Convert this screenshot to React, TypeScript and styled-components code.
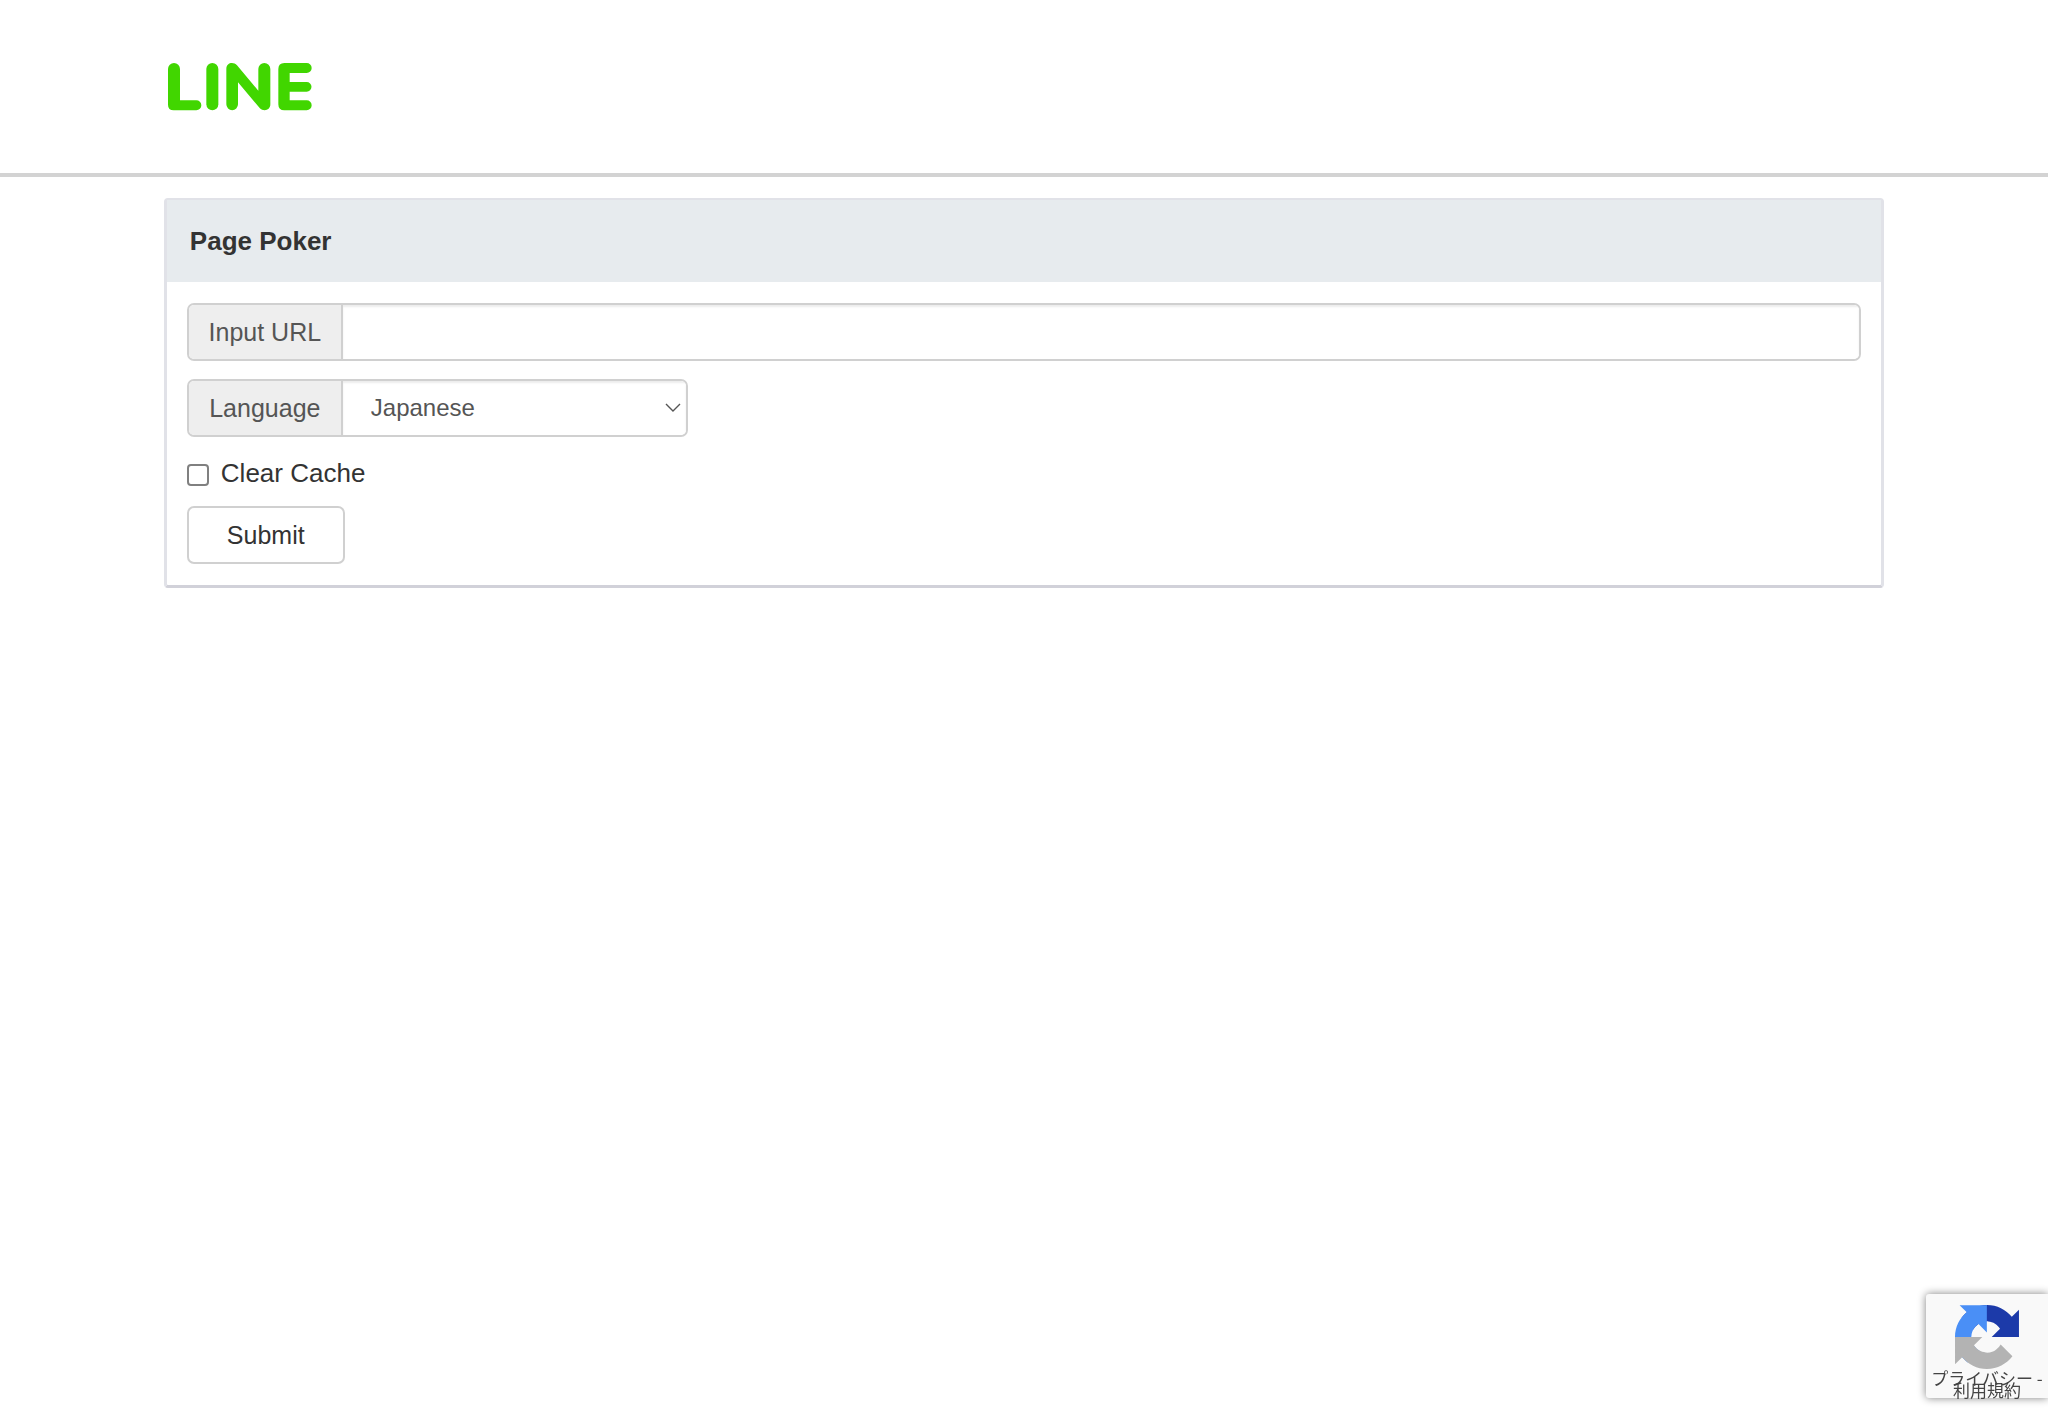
import React from "react";
import styled, { createGlobalStyle } from "styled-components";

const GlobalStyle = createGlobalStyle`
  *, *::before, *::after { box-sizing: border-box; }
  body {
    margin: 0;
    background: #fff;
    color: #333;
    font-family: "Liberation Sans", Arial, "Noto Sans CJK JP", sans-serif;
    font-size: 25px;
    line-height: 36px;
  }
`;

const Header = styled.header`
  padding: 63px 8% 62px;
  border-bottom: 4px solid #d3d3d3;
`;

const LogoLink = styled.a`
  display: block;
  width: fit-content;
  padding-left: 4px;
  svg { display: block; }
`;

const Main = styled.main`
  padding: 21px 8%;
`;

const Panel = styled.section`
  border: 3px solid #e1e2e8;
  border-top-width: 2px;
  border-bottom-color: #d1d1d9;
  border-radius: 4px;
`;

const PanelHeader = styled.header`
  padding: 23px;
  background: #e7ebee;
`;

const PanelTitle = styled.h1`
  margin: 0;
  font-size: 26px;
  line-height: 36px;
`;

const Form = styled.form`
  display: flex;
  flex-direction: column;
  align-items: flex-start;
  padding: 21px 20px;
`;

const InputGroup = styled.div<{ $wide?: boolean }>`
  display: flex;
  width: ${(p) => (p.$wide ? "100%" : "501px")};
  max-width: 100%;
  height: 58px;
  margin-bottom: 18px;
  border: 2px solid #d0d0d0;
  border-radius: 7px;
  overflow: hidden;
`;

const Addon = styled.label`
  flex: 0 0 154px;
  border-right: 2px solid #d0d0d0;
  background: #eee;
  color: #555;
  line-height: 54px;
  text-align: center;
`;

const UrlInput = styled.input`
  flex: 1;
  min-width: 0;
  padding: 0 21px;
  border: 0;
  outline: 0;
  background: #fff;
  box-shadow: inset 0 2px 2px rgba(0, 0, 0, 0.075);
  color: #555;
  font: inherit;
`;

const SelectWrap = styled.div`
  position: relative;
  flex: 1;
  display: flex;
  svg {
    position: absolute;
    right: 5px;
    top: 22px;
    pointer-events: none;
  }
`;

const Select = styled.select`
  flex: 1;
  appearance: none;
  padding: 0 28px;
  border: 0;
  outline: 0;
  background: #fff;
  box-shadow: inset 0 2px 2px rgba(0, 0, 0, 0.075);
  color: #555;
  font: inherit;
  font-size: 24px;
`;

const CheckLabel = styled.label`
  display: flex;
  align-items: center;
  gap: 12px;
  margin-bottom: 15px;
  font-size: 26px;
`;

const Checkbox = styled.input`
  appearance: none;
  width: 22px;
  height: 22px;
  margin: 4px 0 0;
  border: 2px solid #808080;
  border-radius: 4px;
  background: #fff;
  &:checked { background: #0075ff; border-color: #0075ff; }
`;

const SubmitButton = styled.button`
  height: 58px;
  padding: 0 38px;
  border: 2px solid #d0d0d0;
  border-radius: 7px;
  background: #fff;
  color: #333;
  font: inherit;
`;

const Badge = styled.aside`
  position: fixed;
  right: 0;
  bottom: 25px;
  width: 122px;
  height: 104px;
  padding-top: 11px;
  border-radius: 3px 0 0 3px;
  background: #f9f9f9;
  box-shadow: 0 0 9px gray;
  display: flex;
  flex-direction: column;
  align-items: center;
  svg { flex: none; }
`;

const BadgeText = styled.div`
  margin-top: 3px;
  color: #444;
  font-family: "Noto Sans CJK JP", sans-serif;
  font-size: 17px;
  line-height: 12px;
  text-align: center;
  white-space: nowrap;
`;

const BadgeLink = styled.a`
  color: inherit;
  text-decoration: none;
`;

function LineLogo() {
  return (
    <svg width="144" height="48" viewBox="53 69 432 144" fill="#41d600" aria-hidden="true">
      <path d="M53 87a18 18 0 0 1 36 0V181H138a15 15 0 0 1 0 30H70Q53 211 53 194Z" />
      <rect x="168" y="69" width="36" height="142" rx="18" />
      <path d="M228 87C228 68 249 64 260 76L324 152V87a18 18 0 0 1 36 0V193C360 212 339 216 328 204L263 127V193a17.500 17.500 0 0 1-35 0Z" />
      <path d="M384 87Q384 69 402 69H469a15 15 0 0 1 0 30H418V126H469a14.500 14.500 0 0 1 0 29H418V181H469a15 15 0 0 1 0 30H402Q384 211 384 193Z" />
    </svg>
  );
}

function RecaptchaLogo() {
  return (
    <svg width="64" height="64" viewBox="0 0 64 64" aria-hidden="true">
      <path fill="#1c3aa9" d="M64 31.955l-.033-1.37V4.687l-7.16 7.16C50.948 4.674 42.033.093 32.05.093c-10.4 0-19.622 4.96-25.458 12.64l11.736 11.86a15.55 15.55 0 0 1 4.754-5.334c2.05-1.6 4.952-2.906 8.968-2.906.485 0 .86.057 1.135.163 4.976.393 9.288 3.14 11.828 7.124l-8.307 8.307L64 31.953" />
      <path fill="#4a8ff6" d="M31.862.094l-1.37.033H4.594l7.16 7.16C4.58 13.147 0 22.06 0 32.046c0 10.4 4.96 19.622 12.64 25.458L24.5 45.768a15.55 15.55 0 0 1-5.334-4.754c-1.6-2.05-2.906-4.952-2.906-8.968 0-.485.057-.86.163-1.135.393-4.976 3.14-9.288 7.124-11.828l8.307 8.307L31.86.095" />
      <path fill="#b3b3b3" d="M.001 32.045l.033 1.37v25.898l7.16-7.16c5.86 7.173 14.774 11.754 24.76 11.754 10.4 0 19.622-4.96 25.458-12.64L45.674 39.41a15.55 15.55 0 0 1-4.754 5.334c-2.05 1.6-4.952 2.906-8.968 2.906-.485 0-.86-.057-1.135-.163-4.976-.393-9.288-3.14-11.828-7.124l8.307-8.307c-10.522.04-22.4.066-27.295-.005" />
    </svg>
  );
}

export default function App() {
  return (
    <>
      <GlobalStyle />
      <Header>
        <LogoLink href="#" aria-label="LINE">
          <LineLogo />
        </LogoLink>
      </Header>
      <Main>
        <Panel>
          <PanelHeader>
            <PanelTitle>Page Poker</PanelTitle>
          </PanelHeader>
          <Form onSubmit={(e) => e.preventDefault()}>
            <InputGroup $wide>
              <Addon htmlFor="url">Input URL</Addon>
              <UrlInput id="url" type="text" />
            </InputGroup>
            <InputGroup>
              <Addon htmlFor="language">Language</Addon>
              <SelectWrap>
                <Select id="language" defaultValue="ja">
                  <option value="ja">Japanese</option>
                </Select>
                <svg width="16" height="10" viewBox="0 0 16 10" fill="none" stroke="#555" strokeWidth="1.4" aria-hidden="true">
                  <path d="M1 1l7 7 7-7" />
                </svg>
              </SelectWrap>
            </InputGroup>
            <CheckLabel>
              <Checkbox type="checkbox" />
              Clear Cache
            </CheckLabel>
            <SubmitButton type="submit">Submit</SubmitButton>
          </Form>
        </Panel>
      </Main>
      <Badge>
        <RecaptchaLogo />
        <BadgeText>
          <BadgeLink href="#">プライバシー</BadgeLink> -
          <br />
          <BadgeLink href="#">利用規約</BadgeLink>
        </BadgeText>
      </Badge>
    </>
  );
}
